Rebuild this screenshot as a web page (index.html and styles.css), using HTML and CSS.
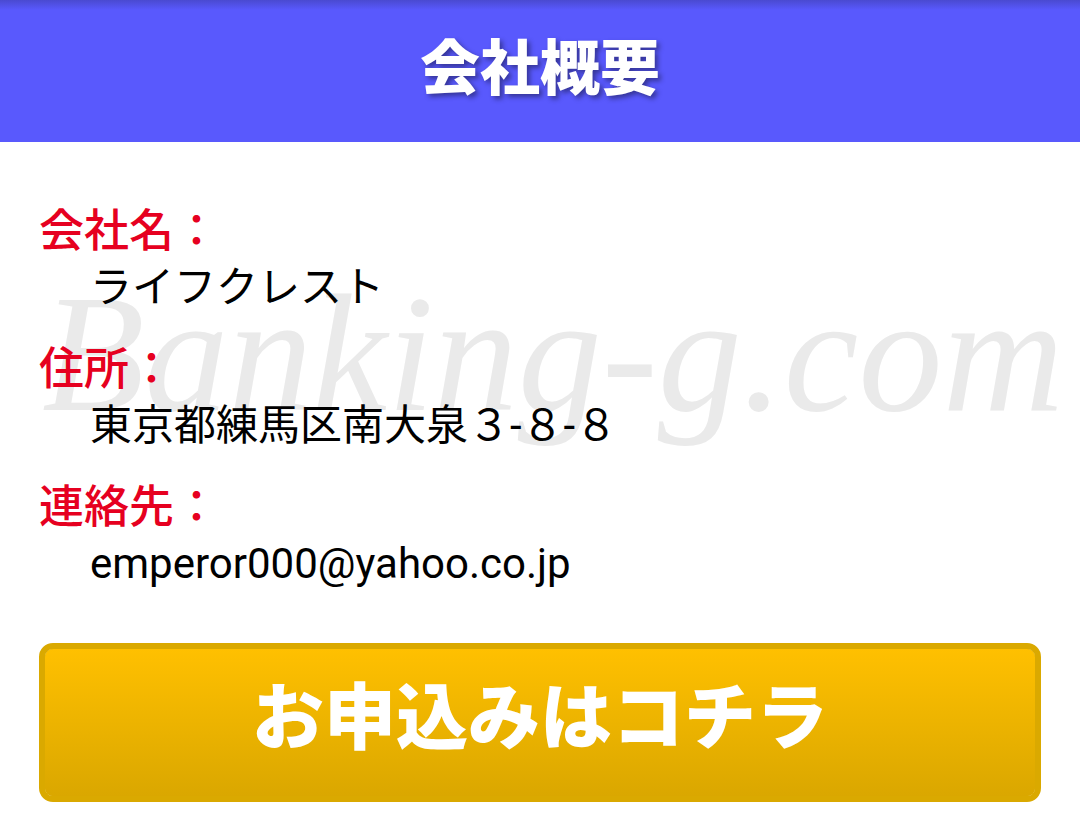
FILE: index.html
```
<!DOCTYPE html>
<html lang="ja">
<head>
<meta charset="UTF-8">
<title>会社概要</title>
<meta name="viewport" content="width=device-width, initial-scale=1.0">
<link rel="stylesheet" href="styles.css">
</head>
<body>
    <header class="page-header">
        <h1>会社概要</h1>
    </header>

    <main class="company">
        <svg class="watermark" viewBox="0 0 1080 320" aria-hidden="true">
            <text x="42" y="190">Banking-g.com</text>
        </svg>

        <dl class="company-info">
            <dt>会社名：</dt>
            <dd>ライフクレスト</dd>
            <dt>住所：</dt>
            <dd>東京都練馬区南大泉３-８-８</dd>
            <dt>連絡先：</dt>
            <dd>emperor000@yahoo.co.jp</dd>
        </dl>

        <button type="button" class="apply-button">お申込みはコチラ</button>
    </main>
</body>
</html>
```

FILE: styles.css
```
* {
    box-sizing: border-box;
}

body {
    margin: 0;
    font-family: Roboto, "Noto Sans CJK JP", sans-serif;
    background-color: #fff;
    color: #000;
}

/* ヘッダー */
.page-header {
    padding: 30px 20px 32px;
    background: linear-gradient(#4a4ad0, #5959fd 10px);
    text-align: center;
}

.page-header h1 {
    margin: 0;
    font-size: 60px;
    line-height: 80px;
    font-weight: 900;
    color: #fff;
    text-shadow: 3px 3px 5px rgba(0, 0, 0, 0.4);
}

/* 会社情報 */
.company {
    position: relative;
    padding: 62px 39px 12px;
}

.watermark {
    position: absolute;
    top: 78px;
    left: 0;
    z-index: -1;
    width: 100%;
}

.watermark text {
    font-family: "Liberation Serif", serif;
    font-style: italic;
    font-size: 168px;
    fill: #eaeaea;
}

.company-info {
    margin: 0 0 51px;
}

.company-info dt {
    font-size: 45px;
    line-height: 56px;
    font-weight: 500;
    color: #e60020;
}

.company-info dd {
    margin: 0 0 26px 51px;
    font-size: 42px;
    line-height: 56px;
}

.company-info dd:last-child {
    margin-bottom: 0;
}

/* 申込みボタン */
.apply-button {
    display: block;
    width: 100%;
    padding: 22px 20px 29px;
    border: 6px solid #daa900;
    border-radius: 14px;
    background: linear-gradient(#ffc000, #daa700) padding-box #daa900;
    background-repeat: no-repeat;
    font-family: inherit;
    font-size: 72px;
    line-height: 96px;
    font-weight: 900;
    color: #fff;
    cursor: pointer;
}
```
